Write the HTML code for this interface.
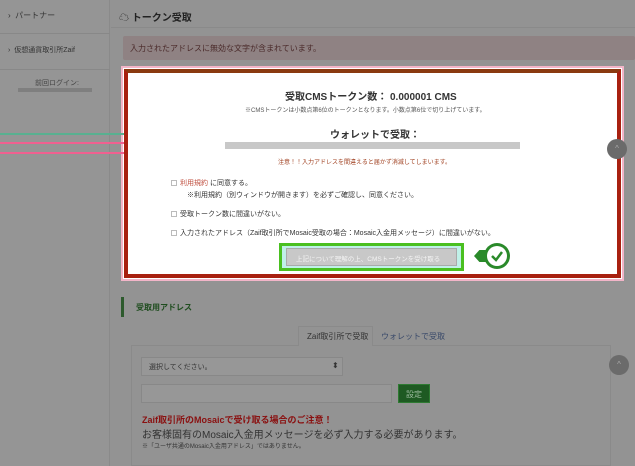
<!DOCTYPE html>
<html><head><meta charset="utf-8"><style>
*{margin:0;padding:0;box-sizing:border-box}
body{width:635px;height:466px;overflow:hidden;background:#939393;font-family:"Liberation Sans","Noto Sans CJK JP",sans-serif;position:relative;color:#333}
.abs{position:absolute}
.side{left:0;top:0;width:110px;height:466px;background:#959595;border-right:1px solid #8a8a8a}
.main{left:111px;top:0;width:524px;height:466px;background:#939393}
.t{font-size:8px;color:#333;white-space:nowrap}
</style></head><body>
<div class="abs side">
 <div class="abs t" style="left:8px;top:10px">›&nbsp; パートナー</div>
 <div class="abs" style="left:0;top:33px;width:110px;height:1px;background:#888"></div>
 <div class="abs t" style="left:8px;top:45px;font-size:7px">›&nbsp; 仮想通貨取引所Zaif</div>
 <div class="abs" style="left:0;top:69px;width:110px;height:1px;background:#888"></div>
 <div class="abs t" style="left:35px;top:78px;font-size:7px;color:#444">前回ログイン:</div>
 <div class="abs" style="left:18px;top:88px;width:74px;height:4px;background:#7f7f7f"></div>
</div>
<div class="abs main">
 <div class="abs t" style="left:8px;top:9px;font-size:10px;font-weight:bold;color:#222">☁ トークン受取</div>
 <div class="abs" style="left:0;top:27px;width:524px;height:1px;background:#8a8a8a"></div>
 <div class="abs" style="left:12px;top:36px;width:512px;height:24px;background:#8f8283;border-radius:2px"></div>
 <div class="abs t" style="left:19px;top:43px;color:#4a2a2a">入力されたアドレスに無効な文字が含まれています。</div>
 <div class="abs" style="left:10px;top:297px;width:3px;height:20px;background:#2d5a2d"></div>
 <div class="abs t" style="left:25px;top:302px;font-weight:bold;color:#1f4d1f">受取用アドレス</div>
 <div class="abs" style="left:20px;top:345px;width:480px;height:121px;border:1px solid #8a8a8a"></div>
 <div class="abs" style="left:187px;top:326px;width:75px;height:20px;background:#939393;border:1px solid #8a8a8a;border-bottom:none"></div>
 <div class="abs t" style="left:196px;top:331px;color:#333">Zaif取引所で受取</div>
 <div class="abs t" style="left:270px;top:331px;color:#3a4a6a">ウォレットで受取</div>
 <div class="abs" style="left:30px;top:357px;width:202px;height:19px;border:1px solid #888;background:#979797"></div>
 <div class="abs t" style="left:38px;top:362px;font-size:7px">選択してください。</div>
 <div class="abs t" style="left:221px;top:361px;font-size:8px">⬍</div>
 <div class="abs" style="left:30px;top:384px;width:251px;height:19px;border:1px solid #888;background:#979797"></div>
 <div class="abs" style="left:287px;top:384px;width:32px;height:19px;background:#1e5a22;border:1px solid #2e7a32"></div>
 <div class="abs t" style="left:295px;top:389px;color:#9ab89c">設定</div>
 <div class="abs t" style="left:31px;top:413px;font-size:9px;font-weight:bold;color:#8a1010">Zaif取引所のMosaicで受け取る場合のご注意！</div>
 <div class="abs t" style="left:31px;top:426px;font-size:10px;color:#333">お客様固有のMosaic入金用メッセージを必ず入力する必要があります。</div>
 <div class="abs t" style="left:31px;top:441px;font-size:6px;color:#333">※「ユーザ共通のMosaic入金用アドレス」ではありません。</div>
 <div class="abs" style="left:498px;top:355px;width:20px;height:20px;border-radius:50%;background:#6b6b6b;color:#aaa;font-size:8px;text-align:center;line-height:20px">^</div>
</div>
<div class="abs" style="left:121px;top:66px;width:503px;height:215px;background:#fff;border:2px solid #f2b5c8"></div>
<div class="abs" style="left:124px;top:69px;width:497px;height:209px;border:4px solid #a82010;border-top-color:#8a3a10"></div>
<div class="abs" style="left:0;top:133px;width:124px;height:2px;background:#58b090"></div>
<div class="abs" style="left:0;top:142px;width:124px;height:2px;background:#f06090"></div>
<div class="abs" style="left:0;top:152px;width:124px;height:2px;background:#f06090"></div>
<div class="abs t" style="left:285px;top:88px;font-size:10px;font-weight:bold;color:#333">受取CMSトークン数： 0.000001 CMS</div>
<div class="abs t" style="left:245px;top:105px;font-size:6px;color:#555">※CMSトークンは小数点第6位のトークンとなります。小数点第6位で切り上げています。</div>
<div class="abs t" style="left:330px;top:126px;font-size:10px;font-weight:bold;color:#333">ウォレットで受取：</div>
<div class="abs" style="left:225px;top:142px;width:295px;height:7px;background:#c8c8c8"></div>
<div class="abs t" style="left:278px;top:157px;font-size:6px;color:#a04020">注意！！入力アドレスを間違えると届かず消滅してしまいます。</div>
<div class="abs" style="left:171px;top:180px;width:6px;height:6px;border:1px solid #bbb"></div>
<div class="abs t" style="left:180px;top:178px;font-size:7px"><span style="color:#c05040">利用規約</span> に同意する。</div>
<div class="abs t" style="left:187px;top:190px;font-size:7px">※利用規約（別ウィンドウが開きます）を必ずご確認し、同意ください。</div>
<div class="abs" style="left:171px;top:211px;width:6px;height:6px;border:1px solid #bbb"></div>
<div class="abs t" style="left:180px;top:209px;font-size:7px">受取トークン数に間違いがない。</div>
<div class="abs" style="left:171px;top:230px;width:6px;height:6px;border:1px solid #bbb"></div>
<div class="abs t" style="left:180px;top:228px;font-size:7px">入力されたアドレス（Zaif取引所でMosaic受取の場合：Mosaic入金用メッセージ）に間違いがない。</div>
<div class="abs" style="left:279px;top:243px;width:185px;height:28px;border:3px solid #4ac020;background:#c0f0e8"></div>
<div class="abs" style="left:286px;top:248px;width:171px;height:18px;background:#c8c8c8;border:1px solid #aaa"></div>
<div class="abs t" style="left:296px;top:253px;font-size:6.5px;color:#f4f4f4">上記について理解の上、CMSトークンを受け取る</div>
<div class="abs" style="left:474px;top:250px;width:18px;height:12px;background:#2a8a2a;clip-path:polygon(30% 0,100% 0,100% 100%,30% 100%,0 50%)"></div>
<div class="abs" style="left:484px;top:243px;width:26px;height:26px;border-radius:50%;background:#2a8a2a;"></div>
<div class="abs" style="left:487px;top:246px;width:20px;height:20px;border-radius:50%;background:#fff"></div>
<svg class="abs" style="left:489px;top:249px" width="16" height="14"><path d="M3 7 L7 11 L13 3" stroke="#2a8a2a" stroke-width="2.5" fill="none"/></svg>
<div class="abs" style="left:607px;top:139px;width:20px;height:20px;border-radius:50%;background:#6b6b6b;color:#aaa;font-size:8px;text-align:center;line-height:20px">^</div>
</body></html>
